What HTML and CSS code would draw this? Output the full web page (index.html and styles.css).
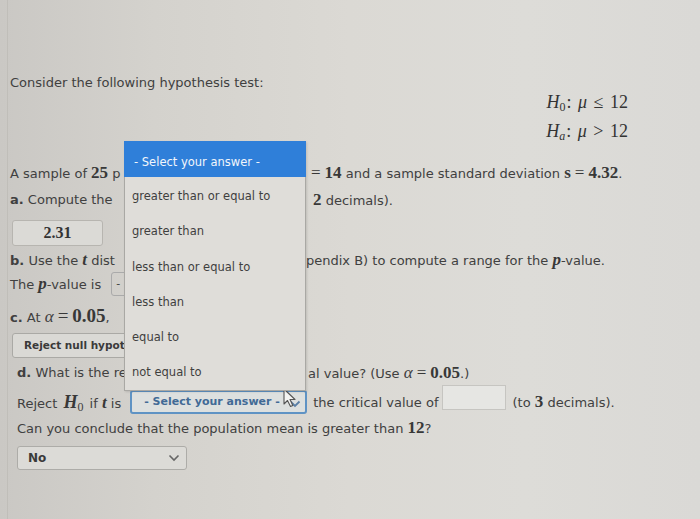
FILE: index.html
```html
<!DOCTYPE html>
<html>
<head>
<meta charset="utf-8">
<link rel="stylesheet" href="styles.css">
</head>
<body>
<div class="page">
  <div class="content">
    <div class="ln intro">Consider the following hypothesis test:</div>
    <div class="hyp">
      <div class="hl"><i>H</i><sub>0</sub><span class="colon">:</span> <i>μ</i> <span class="op">≤</span> 12</div>
      <div class="hl hl2"><i>H</i><sub><i>a</i></sub><span class="colon">:</span> <i>μ</i> <span class="op">&gt;</span> 12</div>
    </div>
    <div class="ln g-sample"><span class="frag lc">A sample of <span class="m">25</span> p</span><span class="rt r-sample"><span class="m"><span class="eq">=</span>14</span> and a sample standard deviation <span class="m">s<span class="eq">=</span>4.32</span>.</span></div>
    <div class="ln g-a"><span class="frag lc"><b>a.</b> Compute the</span><span class="rt r-a"><span class="m">2</span> decimals).</span></div>
    <div class="answer">2.31</div>
    <div class="ln g-b"><span class="frag lc"><b>b.</b> Use the <span class="mb">t</span> dist</span><span class="rt r-b raise">pendix B) to compute a range for the <span class="mb">p</span>-value.</span></div>
    <div class="prow">The <span class="mb">p</span>-value is <span class="minisel">-</span></div>
    <div class="ln g-c"><b>c.</b> At <span class="mi">α</span><span class="m mc"><span class="eq">=</span>0.05</span>,</div>
    <div class="btnsel">Reject null hypot</div>
    <div class="ln g-d sh"><span class="frag lcd"><b>d.</b> What is the re</span><span class="rt r-d raise">al value? (Use <span class="mi">α</span><span class="m"><span class="eq">=</span>0.05</span>.)</span></div>
    <div class="rrow sh">
      <span class="rtxt">Reject <span class="mih">H</span><sub class="s0">0</sub> if <span class="mb">t</span> is</span>
      <span class="focsel">- Select your answer -
        <svg class="chev" width="12" height="8" viewBox="0 0 12 8"><path d="M1.5 1.5 L6 6 L10.5 1.5" fill="none" stroke="#5a7fa6" stroke-width="1.8"/></svg>
        <svg class="cursor" width="14" height="20" viewBox="0 0 14 20"><path d="M1 1 L1 16 L4.5 12.5 L7.5 18.5 L9.8 17.4 L7 11.5 L12 11.5 Z" fill="#f4f4f2" stroke="#555" stroke-width="1.1" stroke-linejoin="round"/></svg>
      </span>
      <span class="rtxt">the critical value of</span>
      <span class="crit"></span>
      <span class="rtxt">(to <span class="m">3</span> decimals).</span>
    </div>
    <div class="ln g-can sh">Can you conclude that the population mean is greater than <span class="m">12</span>?</div>
    <div class="nosel sh2">No
      <svg width="12" height="8" viewBox="0 0 12 8"><path d="M1.5 1.5 L6 6 L10.5 1.5" fill="none" stroke="#666" stroke-width="1.6"/></svg>
    </div>
  </div>

  <div class="dropdown">
    <div class="dd-head">- Select your answer -</div>
    <div class="dd-item">greater than or equal to</div>
    <div class="dd-item">greater than</div>
    <div class="dd-item">less than or equal to</div>
    <div class="dd-item">less than</div>
    <div class="dd-item">equal to</div>
    <div class="dd-item">not equal to</div>
  </div>
</div>
</body>
</html>
```

FILE: styles.css
```css
html, body {
  margin: 0;
  padding: 0;
}
.page {
  position: relative;
  width: 700px;
  height: 519px;
  overflow: hidden;
  background: linear-gradient(90deg, #cac8c4 0%, #d4d2cd 22%, #dbd9d4 50%, #dddcd8 75%, #dad9d6 100%);
  font-family: "DejaVu Sans", Verdana, sans-serif;
  font-size: 13px;
  color: #404040;
}
.content {
  margin-left: 7px;
  border-left: 1px solid #c0beb9;
  padding: 73px 0 0 2px;
  height: 446px;
}
.ln {
  height: 20px;
  line-height: 20px;
  white-space: nowrap;
}
.m {
  font-family: "Liberation Serif", serif;
  font-weight: bold;
  font-size: 17px;
  color: #383838;
}
.mc { font-size: 19px; }
.eq {
  margin: 0 4px;
  font-weight: normal;
}
.mi {
  font-family: "Liberation Serif", serif;
  font-style: italic;
  font-size: 17px;
}
.mb, .mih {
  font-family: "Liberation Serif", serif;
  font-style: italic;
  font-weight: bold;
  font-size: 17px;
  color: #383838;
}
.mih { font-size: 18px; margin-left: 2px; }
.s0 {
  font-family: "Liberation Serif", serif;
  font-size: 12px;
  vertical-align: -3px;
  line-height: 0;
  margin-right: 2px;
}
.frag {
  display: inline-block;
  vertical-align: top;
  white-space: nowrap;
}
.lc { width: 114px; }
.lcd { width: 107px; }
.rt { display: inline-block; vertical-align: top; }
.raise { vertical-align: 4px; }
.r-sample { padding-left: 183px; }
.r-a { padding-left: 189px; }
.r-b { padding-left: 182px; }
.r-d { padding-left: 184px; }

.hyp {
  margin-top: -1px;
  text-align: right;
  padding-right: 72px;
  font-family: "Liberation Serif", serif;
  font-size: 18px;
  color: #333;
}
.hl {
  height: 20px;
  line-height: 20px;
}
.hl2 { margin-top: 9px; }
.hyp sub {
  font-size: 12px;
  vertical-align: -3px;
  line-height: 0;
}
.colon { margin-left: 1px; margin-right: 2px; }
.op { margin: 0 2px; }

.g-sample { margin-top: 22px; }
.g-a { margin-top: 7px; }
.answer {
  margin: 10px 0 0 2px;
  width: 89px;
  height: 24px;
  line-height: 24px;
  border: 1px solid #b7b5b0;
  border-radius: 3px;
  background: #dbdad6;
  text-align: center;
  font-family: "Liberation Serif", serif;
  font-weight: bold;
  font-size: 16px;
  color: #333;
}
.g-b { margin-top: 4px; }
.prow {
  margin-top: 2px;
  height: 24px;
  line-height: 24px;
  white-space: nowrap;
}
.minisel {
  display: inline-block;
  vertical-align: top;
  margin-left: 6px;
  box-sizing: border-box;
  height: 24px;
  line-height: 22px;
  border: 1px solid #aaa;
  border-radius: 3px;
  padding-left: 4px;
  font-size: 11px;
  width: 160px;
}
.g-c { margin-top: 10px; }
.btnsel {
  margin: 7px 0 0 2px;
  width: 170px;
  height: 23px;
  line-height: 23px;
  border: 1px solid #aaa9a5;
  border-radius: 3px;
  padding-left: 11px;
  font-size: 10.5px;
  font-weight: bold;
  color: #3a3a3a;
  background: #dad9d5;
  white-space: nowrap;
}
.sh { padding-left: 7px; }
.sh2 { margin-left: 7px; }
.g-d { margin-top: 5px; }
.rrow {
  margin-top: 7px;
  height: 24px;
  display: flex;
  align-items: center;
  white-space: nowrap;
}
.focsel {
  position: relative;
  margin: 0 6px 0 9px;
  box-sizing: border-box;
  width: 177px;
  height: 24px;
  line-height: 20px;
  border: 2px solid #5f93c4;
  border-radius: 3px;
  background: #dde0df;
  padding-left: 12px;
  font-size: 11px;
  font-weight: bold;
  color: #416a96;
}
.cursor {
  position: absolute;
  left: 151px;
  top: -4px;
}
.chev {
  position: absolute;
  right: 4px;
  top: 8px;
}
.crit {
  display: inline-block;
  margin: -10px 6px 0 4px;
  width: 62px;
  height: 23px;
  border: 1px solid #c6c5c1;
  background: #e6e6e3;
}
.g-can { margin-top: 4px; }
.nosel {
  margin-top: 8px;
  box-sizing: border-box;
  width: 170px;
  height: 24px;
  border: 1px solid #adaca8;
  border-radius: 3px;
  background: #dcdbd7;
  padding: 0 6px 0 10px;
  display: flex;
  align-items: center;
  justify-content: space-between;
  font-size: 12px;
  font-weight: bold;
  color: #3a3a3a;
}

.dropdown {
  position: absolute;
  left: 124px;
  top: 141px;
  width: 182px;
  height: 250px;
  box-sizing: border-box;
  border: 1px solid #a9a8a4;
  border-top: none;
  background: #dfddd9;
  box-shadow: 1px 1px 2px rgba(0,0,0,0.12);
  z-index: 5;
}
.dd-head {
  height: 36px;
  box-sizing: border-box;
  padding: 3px 0 0 10px;
  line-height: 36px;
  margin: 0 -1px;
  background: #2f7fd9;
  color: #f2f6fb;
  font-size: 11.5px;
}
.dd-item {
  height: 35.3px;
  line-height: 35px;
  padding-left: 7px;
  font-size: 11.5px;
  color: #3f3f3f;
  white-space: nowrap;
}
.dd-head + .dd-item { margin-top: 2px; }
```
